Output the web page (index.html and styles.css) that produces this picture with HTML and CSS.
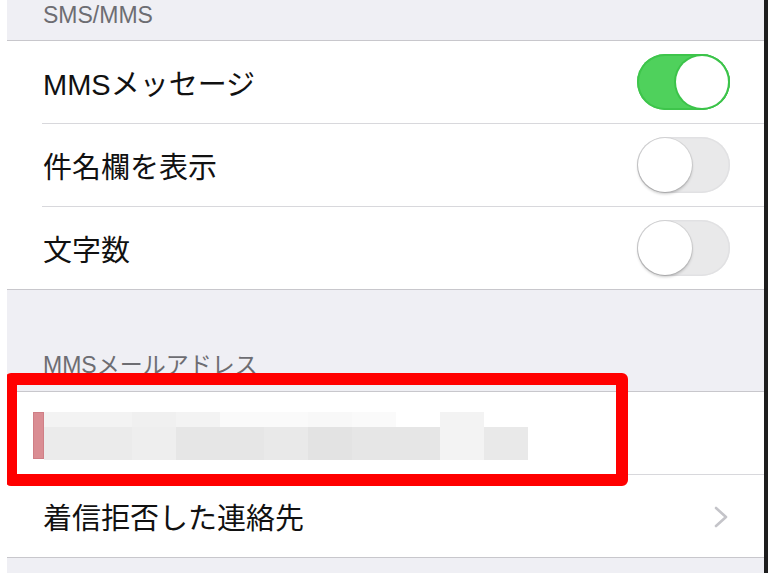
FILE: index.html
```html
<!DOCTYPE html>
<html lang="ja">

<head>
    <meta charset="UTF-8">
    <meta name="viewport" content="width=device-width, initial-scale=1">
    <title>メッセージ設定</title>
    <link rel="stylesheet" href="styles.css">
</head>

<body>

    <div class="screen">
        <div class="header first">SMS/MMS</div>
        <div class="group">
            <div class="row">
                <div class="row-inner">
                    <span class="label">MMSメッセージ</span>
                    <span class="switch on"><span class="knob"></span></span>
                </div>
            </div>
            <div class="row">
                <div class="row-inner">
                    <span class="label">件名欄を表示</span>
                    <span class="switch"><span class="knob"></span></span>
                </div>
            </div>
            <div class="row">
                <div class="row-inner last">
                    <span class="label">文字数</span>
                    <span class="switch"><span class="knob"></span></span>
                </div>
            </div>
        </div>

        <div class="header second">MMSメールアドレス</div>
        <div class="group">
            <div class="row">
                <div class="row-inner">
                    <div class="field">
                        <span class="cursor"></span>
                        <div class="blur">
                            <span class="s2"></span><span class="s2"></span><span class="s3"></span><span class="s2"></span>
                            <span class="s0"></span><span class="s0"></span><span class="s1"></span><span class="s0"></span>
                            <span class="sw"></span><span class="s2"></span><span class="sw"></span>
                            <span class="s5"></span><span class="s5"></span><span class="s4"></span><span class="s7"></span>
                            <span class="s7"></span><span class="s6"></span><span class="s8"></span><span class="s7"></span>
                            <span class="s7"></span><span class="s2"></span><span class="s6"></span>
                        </div>
                    </div>
                </div>
            </div>
            <div class="row">
                <div class="row-inner last">
                    <span class="label">着信拒否した連絡先</span>
                    <svg class="chevron" width="14" height="22" viewBox="0 0 14 22">
                        <polyline points="2,2 12,11 2,20" fill="none" stroke="#c4c4c9" stroke-width="2.6" stroke-linecap="round" stroke-linejoin="round" />
                    </svg>
                </div>
            </div>
        </div>

        <!-- 赤枠 -->
        <div class="highlight"></div>
    </div>

</body>

</html>
```

FILE: styles.css
```css
body {
    margin: 0;
    font-family: "Liberation Sans", "Noto Sans CJK JP", sans-serif;
    background: #efeff4;
    overflow: hidden;
}

.screen {
    position: relative;
    height: 573px;
    background: #efeff4;
    border-left: 7px solid #fff;
    border-right: 4px solid #1e1e1e;
    overflow: hidden;
}

.header {
    box-sizing: border-box;
    padding-left: 36px;
    font-size: 23px;
    line-height: 23px;
    color: #6d6d72;
}

.header.first {
    height: 40px;
    padding-top: 4px;
}

.header.second {
    height: 101px;
    display: flex;
    align-items: flex-end;
    padding-bottom: 14px;
}

.group {
    background: #fff;
    border-top: 1px solid #c8c7cc;
    border-bottom: 1px solid #c8c7cc;
}

.row {
    padding-left: 35px;
}

.row-inner {
    height: 82px;
    display: flex;
    align-items: center;
    justify-content: space-between;
    padding-right: 34px;
    border-bottom: 1px solid #d8d8dc;
}

.row-inner.last {
    border-bottom: none;
}

.label {
    font-size: 29px;
    color: #111;
    padding-left: 1px;
}

/* スイッチ */
.switch {
    position: relative;
    width: 93px;
    height: 56px;
    border-radius: 28px;
    background: #e9e9ea;
    box-shadow: inset 0 0 0 1.5px #e1e1e3;
}

.switch .knob {
    position: absolute;
    top: 1px;
    left: 1px;
    width: 54px;
    height: 54px;
    border-radius: 50%;
    background: #fff;
    box-shadow: 0 2px 3px rgba(0, 0, 0, 0.22), 0 0 0 1px rgba(0, 0, 0, 0.07);
}

.switch.on {
    background: #4fd15c;
    box-shadow: inset 0 0 0 2px #3ec54b;
}

.switch.on .knob {
    left: auto;
    right: 2px;
    top: 2px;
    width: 52px;
    height: 52px;
    box-shadow: 0 0 0 2px #3cc34a;
}

.chevron {
    margin-right: 2px;
    margin-top: 2px;
}

/* ぼかしたアドレス */
.field {
    display: flex;
    margin-left: -9px;
    margin-top: 6px;
}

.cursor {
    width: 11px;
    height: 47px;
    background: #da8d93;
    box-shadow: inset 0 0 0 1px #cf7f86;
}

.blur {
    display: grid;
    grid-template-columns: repeat(11, 44px);
    grid-template-rows: 15px 33px;
}

.sw { background: #fff; }
.s0 { background: #fafafa; }
.s1 { background: #f8f8f8; }
.s2 { background: #f3f3f3; }
.s3 { background: #f0f0f0; }
.s4 { background: #eeeeee; }
.s5 { background: #ebebeb; }
.s6 { background: #e9e9e9; }
.s7 { background: #e6e6e6; }
.s8 { background: #e3e3e3; }

.highlight {
    position: absolute;
    left: -2px;
    top: 373px;
    width: 623px;
    height: 113px;
    box-sizing: border-box;
    border: 12px solid #ff0000;
    border-radius: 6px;
}
```
